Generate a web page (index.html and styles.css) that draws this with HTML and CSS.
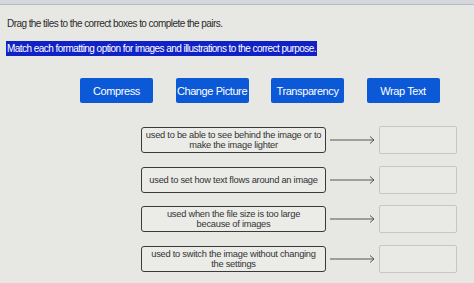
FILE: index.html
```html
<html>
<head>
    <title>Drag and Drop Pairs</title>
    <link rel="stylesheet" href="styles.css">
</head>
<body>
    <div class="topbar"></div>
    <div class="question">
        <p class="prompt">Drag the tiles to the correct boxes to complete the pairs.</p>
        <p class="task"><span>Match each formatting option for images and illustrations to the correct purpose.</span></p>

        <div class="tiles">
            <div class="tile">Compress</div>
            <div class="tile">Change Picture</div>
            <div class="tile">Transparency</div>
            <div class="tile">Wrap Text</div>
        </div>

        <div class="pairs">
            <div class="pair">
                <div class="purpose">used to be able to see behind the image or to make the image lighter</div>
                <svg class="arrow" width="48" height="10" viewBox="0 0 48 10">
                    <path d="M1 5 H45 M41 1.5 L45 5 L41 8.5" fill="none" stroke="#555" stroke-width="1"/>
                </svg>
                <div class="drop"></div>
            </div>
            <div class="pair">
                <div class="purpose">used to set how text flows around an image</div>
                <svg class="arrow" width="48" height="10" viewBox="0 0 48 10">
                    <path d="M1 5 H45 M41 1.5 L45 5 L41 8.5" fill="none" stroke="#555" stroke-width="1"/>
                </svg>
                <div class="drop"></div>
            </div>
            <div class="pair">
                <div class="purpose">used when the file size is too large<br>because of images</div>
                <svg class="arrow" width="48" height="10" viewBox="0 0 48 10">
                    <path d="M1 5 H45 M41 1.5 L45 5 L41 8.5" fill="none" stroke="#555" stroke-width="1"/>
                </svg>
                <div class="drop"></div>
            </div>
            <div class="pair">
                <div class="purpose">used to switch the image without changing<br>the settings</div>
                <svg class="arrow" width="48" height="10" viewBox="0 0 48 10">
                    <path d="M1 5 H45 M41 1.5 L45 5 L41 8.5" fill="none" stroke="#555" stroke-width="1"/>
                </svg>
                <div class="drop"></div>
            </div>
        </div>
    </div>
</body>
</html>
```

FILE: styles.css
```css
body {
    margin: 0;
    background-color: #e7e7e4;
    font-family: 'Liberation Sans', Arial, sans-serif;
    color: #2b2b2b;
}

.topbar {
    height: 4px;
    background-color: #d4d7dc;
    border-bottom: 1px solid #b8bbc0;
}

.question {
    padding: 0 0 0 6px;
}

.prompt {
    margin: 13px 0 0 1px;
    font-size: 10px;
    letter-spacing: -0.56px;
    line-height: 12px;
}

.task {
    margin: 11px 0 0 0;
    line-height: 15px;
}

.task span {
    display: inline-block;
    padding: 0 1px;
    background-color: #1022c6;
    color: #fff;
    font-size: 10px;
    letter-spacing: -0.55px;
}

.tiles {
    display: flex;
    gap: 22.5px;
    margin: 22px 0 0 74px;
}

.tile {
    width: 73px;
    height: 25px;
    display: flex;
    align-items: center;
    justify-content: center;
    background-color: #0c59d8;
    border-radius: 2px;
    color: #fff;
    font-size: 11px;
    letter-spacing: -0.4px;
}

.pairs {
    display: flex;
    flex-direction: column;
    gap: 11.7px;
    margin: 23px 0 0 135px;
}

.pair {
    display: flex;
    align-items: center;
}

.purpose {
    width: 181px;
    height: 24px;
    display: flex;
    align-items: center;
    justify-content: center;
    text-align: center;
    padding: 0 1px;
    border: 1.5px solid #3a3a3a;
    border-radius: 3px;
    background-color: #ebebe8;
    font-size: 9.3px;
    letter-spacing: -0.25px;
    line-height: 10px;
    color: #333;
}

.arrow {
    margin-left: 3px;
}

.drop {
    width: 76px;
    height: 26px;
    margin-left: 2px;
    border: 1px solid #c6c6c4;
    border-radius: 2px;
    background-color: #e9e9e6;
}
```
